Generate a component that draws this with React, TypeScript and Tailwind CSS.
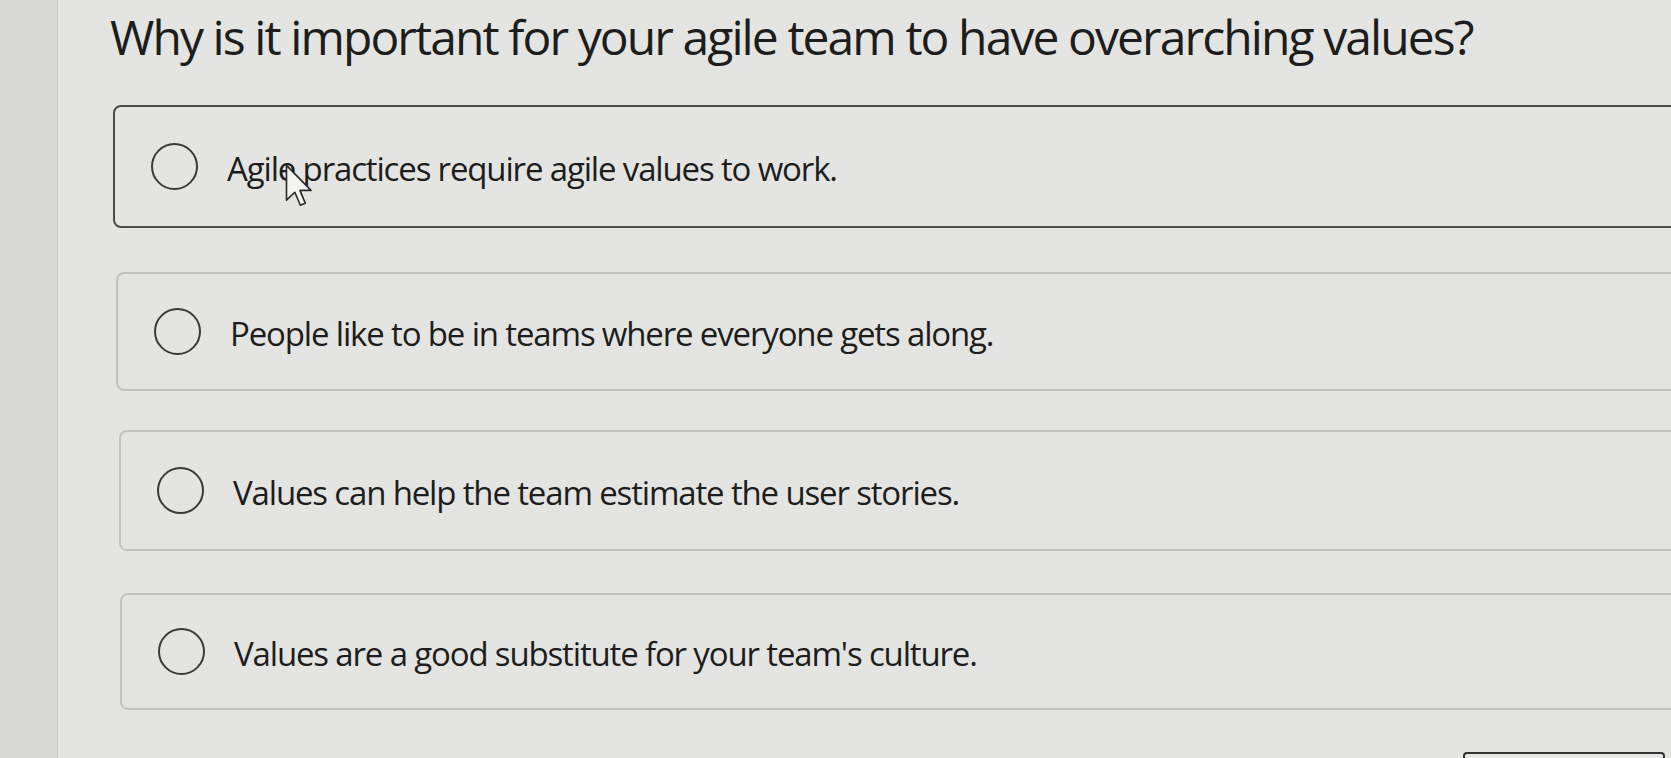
import React from "react";

const options = [
  { text: "Agile practices require agile values to work.", ml: "ml-[55px]", mt: "mt-[36px]", h: "h-[123px]", border: "border-[#4a4a4a] border-2" },
  { text: "People like to be in teams where everyone gets along.", ml: "ml-[58px]", mt: "mt-[44px]", h: "h-[119px]", border: "border-[#c2c3bf] border-2" },
  { text: "Values can help the team estimate the user stories.", ml: "ml-[61px]", mt: "mt-[39px]", h: "h-[121px]", border: "border-[#c2c3bf] border-2" },
  { text: "Values are a good substitute for your team's culture.", ml: "ml-[62px]", mt: "mt-[42px]", h: "h-[117px]", border: "border-[#c2c3bf] border-2" },
];

export default function App() {
  return (
    <div className="relative w-[1671px] h-[758px] overflow-hidden bg-[#e4e5e2] flex font-['Open_Sans','Noto_Sans',sans-serif] text-[#1d1d1d]">
      <div className="w-[58px] shrink-0 bg-[#dadbd7] border-r border-[#cfd0cc]" />
      <div className="flex-1 flex flex-col min-w-0">
        <h1 className="ml-[52px] mt-[5px] text-[48px] leading-[64px] tracking-[-0.04em] font-normal whitespace-nowrap">
          Why is it important for your agile team to have overarching values?
        </h1>
        {options.map((o, i) => (
          <div
            key={i}
            className={`${o.ml} ${o.mt} ${o.h} ${o.border} w-[1640px] shrink-0 rounded-[8px] flex items-center pl-[36px]`}
          >
            <div className="w-[47px] h-[47px] shrink-0 rounded-full border-[2.5px] border-[#3a3a3a]" />
            <span className="ml-[29px] pt-[4px] text-[33px] tracking-[-0.035em] whitespace-nowrap">{o.text}</span>
          </div>
        ))}
        <div className="flex justify-end mt-[42px] pr-[6px]">
          <div className="w-[202px] h-[20px] shrink-0 border-2 border-[#333] rounded-t-[4px] bg-[#e7e8e5]" />
        </div>
      </div>
      <svg className="absolute left-[285px] top-[164px]" width="28" height="44" viewBox="0 0 12 19">
        <path d="M0.6 0.6 L0.6 15.6 L4.2 12.2 L6.6 17.8 L8.7 16.9 L6.4 11.4 L11.2 11.4 Z" fill="#f4f4f2" stroke="#2a2a2a" strokeWidth="0.7" strokeLinejoin="round" />
      </svg>
    </div>
  );
}
